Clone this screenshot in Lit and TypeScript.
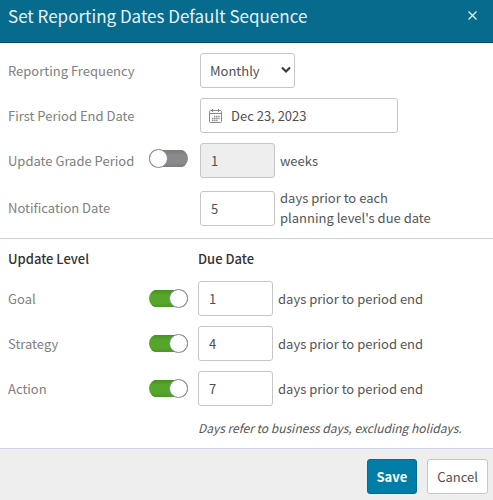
import { LitElement, html, css } from "lit";
import { customElement, property } from "lit/decorators.js";

const base = css`
  * {
    box-sizing: border-box;
  }
  input,
  select,
  button {
    font: inherit;
    margin: 0;
  }
`;

@customElement("toggle-switch")
export class ToggleSwitch extends LitElement {
  @property({ type: Boolean }) checked = false;
  @property() label = "";

  static styles = [
    base,
    css`
      :host {
        display: block;
        width: 39px;
        height: 19px;
      }
      .switch {
        appearance: none;
        display: flex;
        align-items: center;
        width: 39px;
        height: 19px;
        cursor: pointer;
        background: linear-gradient(#7b7b7b, #8a8a8a 30%, #8a8a8a 75%, #7d7d7d) center / 100% 17px no-repeat;
        border-radius: 10px;
      }
      .switch::before {
        content: "";
        box-sizing: border-box;
        width: 19px;
        height: 19px;
        border: 1px solid #8087a0;
        border-radius: 50%;
        background: #fff;
      }
      .switch:checked {
        justify-content: flex-end;
        background-image: linear-gradient(#489022, #56a62b 30%, #56a62b 75%, #4b9724);
      }
    `,
  ];

  render() {
    return html`<input
      class="switch"
      type="checkbox"
      role="switch"
      aria-label=${this.label}
      .checked=${this.checked}
      @change=${(e: Event) => (this.checked = (e.target as HTMLInputElement).checked)}
    />`;
  }
}

@customElement("app-root")
export class AppRoot extends LitElement {
  private levels = [
    { id: "goal", name: "Goal", days: 1 },
    { id: "strategy", name: "Strategy", days: 4 },
    { id: "action", name: "Action", days: 7 },
  ];

  static styles = [
    base,
    css`
      :host {
        display: block;
        font-family: "Source Sans Pro", "Noto Sans CJK SC", sans-serif;
        font-size: 13px;
        line-height: 20px;
        color: #555;
        background: #fff;
      }
      .header {
        display: flex;
        justify-content: space-between;
        align-items: flex-start;
        height: 43px;
        padding: 4px 12px 0 8px;
        background: #066b8d;
        border-bottom: 1px solid #064a62;
        color: #e8f1f4;
      }
      .title {
        margin: 0;
        font-size: 17px;
        font-weight: 400;
        line-height: 24px;
      }
      .close {
        display: flex;
        align-items: center;
        justify-content: center;
        width: 17px;
        height: 22px;
        padding: 0;
        border: 0;
        background: none;
        color: inherit;
      }
      .section {
        display: flex;
        flex-direction: column;
        gap: 10px;
        padding: 10px 8px;
        border-bottom: 1px solid #cfd2e4;
      }
      .row {
        display: grid;
        grid-template-columns: 141px 39px 1fr;
        align-items: center;
      }
      .name {
        color: #808080;
        white-space: nowrap;
      }
      .control {
        display: flex;
        align-items: center;
        grid-column: 3;
        gap: 5px;
        padding-left: 12px;
      }
      .levels .control {
        padding-left: 10px;
      }
      .lift {
        margin-bottom: 4px;
      }
      .field {
        width: 75px;
        height: 35px;
        padding: 0 10px;
        border: 1px solid #c6c6c6;
        border-radius: 3px;
        background: #fff;
        color: #505050;
      }
      .field:disabled {
        background: #eee;
      }
      .picker {
        position: relative;
        display: grid;
        width: 95px;
      }
      .picker .field {
        appearance: none;
        width: 100%;
        padding-left: 9px;
      }
      .chevron {
        position: absolute;
        right: 4px;
        top: 13px;
        pointer-events: none;
      }
      .date {
        display: flex;
        align-items: center;
        gap: 9px;
        width: 198px;
        padding-left: 8px;
      }
      .date-input {
        flex: 1;
        min-width: 0;
        padding: 0;
        border: 0;
        background: none;
        color: inherit;
      }
      .heading {
        margin: 0 0 2px;
        font-size: 13px;
        font-weight: 500;
        line-height: 20px;
        color: #333;
      }
      .note {
        margin: 2px 0 0 190px;
        font-size: 12px;
        font-style: italic;
        color: #555;
      }
      .footer {
        display: flex;
        justify-content: flex-end;
        gap: 10px;
        padding: 10px 5px 6px;
        background: #eee;
      }
      .button {
        height: 35px;
        padding: 0 9px;
        border: 1px solid #c6c6c6;
        border-radius: 3px;
        background: #fff;
        color: #505050;
      }
      .save {
        border-color: #066b8d;
        background: #007ea8;
        color: #fff;
        font-weight: 700;
      }
    `,
  ];

  render() {
    return html`
      <header class="header">
        <h1 class="title">Set Reporting Dates Default Sequence</h1>
        <button class="close" aria-label="Close">
          <svg width="9" height="9" viewBox="0 0 9 9" fill="none" stroke="currentColor" stroke-width="1.2">
            <path d="M0.5 0.5 8.5 8.5M8.5 0.5 0.5 8.5" />
          </svg>
        </button>
      </header>
      <section class="section">
        <div class="row">
          <label class="name" for="frequency">Reporting Frequency</label>
          <div class="control">
            <div class="picker">
              <select class="field" id="frequency">
                <option>Monthly</option>
              </select>
              <svg class="chevron" width="10" height="8" viewBox="0 0 10 8" fill="none" stroke="#3c3c3c" stroke-width="2.2">
                <path d="M1 1.5 5 5.5 9 1.5" />
              </svg>
            </div>
          </div>
        </div>
        <div class="row">
          <label class="name" for="end-date">First Period End Date</label>
          <div class="control">
            <div class="field date">
              <svg width="13" height="14" viewBox="0 0 13 14" fill="none" stroke="#888">
                <rect x="0.5" y="1.5" width="12" height="12" rx="1" />
                <path d="M0.5 4.5h12M3.5 0v3M9.5 0v3" />
                <path d="M5 7.5h5.5M3 9.5h7.5M3 11.5h5.5" stroke-width="1.3" stroke-dasharray="1.4 0.7" />
              </svg>
              <input class="date-input" id="end-date" type="text" value="Dec 23, 2023" />
            </div>
          </div>
        </div>
        <div class="row">
          <label class="name" for="grade-weeks">Update Grade Period</label>
          <toggle-switch class="lift" label="Update Grade Period"></toggle-switch>
          <div class="control">
            <input class="field" id="grade-weeks" type="text" value="1" disabled />
            <span>weeks</span>
          </div>
        </div>
        <div class="row">
          <label class="name" for="notify-days">Notification Date</label>
          <div class="control">
            <input class="field" id="notify-days" type="text" value="5" />
            <span>days prior to each<br />planning level's due date</span>
          </div>
        </div>
      </section>
      <section class="section levels">
        <h2 class="row heading">
          <span>Update Level</span>
          <span class="control">Due Date</span>
        </h2>
        ${this.levels.map(
          (level) => html`
            <div class="row">
              <label class="name" for=${level.id}>${level.name}</label>
              <toggle-switch checked label=${level.name}></toggle-switch>
              <div class="control">
                <input class="field" id=${level.id} type="text" .value=${String(level.days)} />
                <span>days prior to period end</span>
              </div>
            </div>
          `
        )}
        <p class="note">Days refer to business days, excluding holidays.</p>
      </section>
      <footer class="footer">
        <button class="button save">Save</button>
        <button class="button">Cancel</button>
      </footer>
    `;
  }
}
